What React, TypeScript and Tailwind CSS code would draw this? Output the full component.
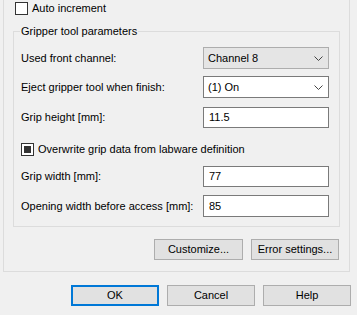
import React from 'react';

const Chevron = () => (
  <svg width="9" height="5" viewBox="0 0 9 5" className="shrink-0">
    <polyline points="0.5,0.5 4.5,4.5 8.5,0.5" fill="none" stroke="#444" strokeWidth="1" />
  </svg>
);

const Select = ({ value, disabled }: { value: string; disabled?: boolean }) => (
  <div
    className={
      disabled
        ? 'w-[126px] h-[22px] flex items-center justify-between pl-[4px] pr-[5px] bg-[#e5e5e5] border border-[#adadad]'
        : 'w-[126px] h-[22px] flex items-center justify-between pl-[4px] pr-[5px] bg-white border border-[#7a7a7a]'
    }
  >
    <span>{value}</span>
    <Chevron />
  </div>
);

const Input = ({ value, h = 'h-[21px]' }: { value: string; h?: string }) => (
  <div className={`w-[126px] ${h} flex items-center pl-[5px] bg-white border border-[#7a7a7a]`}>{value}</div>
);

const Row = ({ label, children, className }: { label: string; children: React.ReactNode; className: string }) => (
  <div className={`flex items-center justify-between ${className}`}>
    <span>{label}</span>
    {children}
  </div>
);

const Button = ({ label, w = 'w-[88px]', primary }: { label: string; w?: string; primary?: boolean }) => (
  <div
    className={
      primary
        ? `${w} h-[21px] flex items-center justify-center bg-[#e1e1e1] border-2 border-[#0078d7]`
        : `${w} h-[21px] flex items-center justify-center bg-[#e1e1e1] border border-[#adadad]`
    }
  >
    {label}
  </div>
);

export default function App() {
  return (
    <div className="w-[357px] h-[315px] bg-[#f0f0f0] overflow-hidden text-[11px] text-black font-['Liberation_Sans',Arial,sans-serif] leading-none">
      <div className="ml-[3px] w-[347px] h-[272px] border-x border-b border-[#dcdcdc] flex flex-col">
        <div className="mt-[2px] ml-[11px] flex items-center gap-[4px] h-[13px]">
          <div className="w-[13px] h-[13px] border border-[#333] bg-white" />
          <span>Auto increment</span>
        </div>

        <div className="relative mt-[16px] ml-[9px] w-[327px] h-[196px] border border-[#dcdcdc] flex flex-col pl-[7px] pr-[10px]">
          <span className="absolute left-[6px] top-[-6px] px-[1px] bg-[#f0f0f0]">Gripper tool parameters</span>

          <Row label="Used front channel:" className="mt-[15px]">
            <Select value="Channel 8" disabled />
          </Row>
          <Row label="Eject gripper tool when finish:" className="mt-[7px]">
            <Select value="(1) On" />
          </Row>
          <Row label="Grip height [mm]:" className="mt-[9px]">
            <Input value="11.5" />
          </Row>

          <div className="mt-[15px] flex items-center gap-[4px] h-[13px]">
            <div className="w-[13px] h-[13px] border border-[#333] bg-white p-[2px]">
              <div className="w-full h-full bg-[#333]" />
            </div>
            <span>Overwrite grip data from labware definition</span>
          </div>

          <Row label="Grip width [mm]:" className="mt-[10px]">
            <Input value="77" />
          </Row>
          <Row label="Opening width before access [mm]:" className="mt-[8px]">
            <Input value="85" h="h-[22px]" />
          </Row>
        </div>

        <div className="mt-[12px] pr-[10px] flex justify-end gap-[8px]">
          <Button label="Customize..." w="w-[89px]" />
          <Button label="Error settings..." />
        </div>
      </div>

      <div className="mt-[13px] pr-[6px] flex justify-end gap-[8px]">
        <Button label="OK" primary />
        <Button label="Cancel" />
        <Button label="Help" />
      </div>
    </div>
  );
}
